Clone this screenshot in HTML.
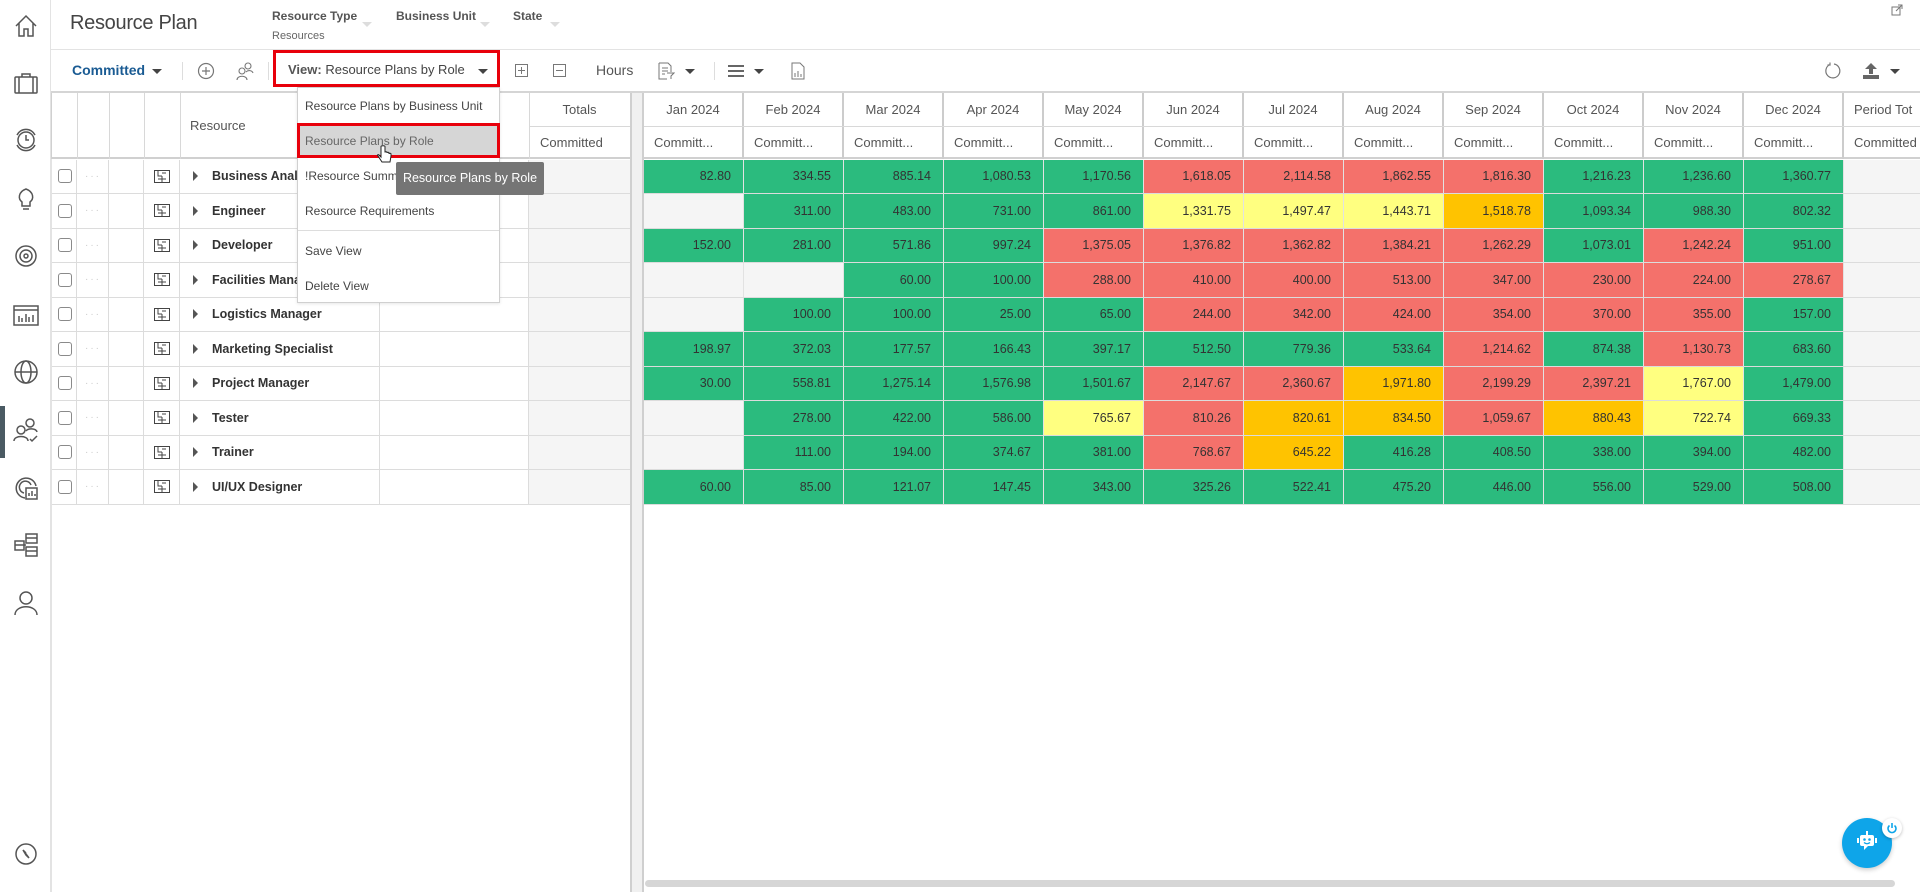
<!DOCTYPE html>
<html><head><meta charset="utf-8">
<style>
*{box-sizing:border-box;margin:0;padding:0}
body{width:1920px;height:892px;overflow:hidden;background:#fff;font-family:"Liberation Sans",sans-serif;color:#333;position:relative}
.abs{position:absolute}
#side{left:0;top:0;width:51px;height:892px;border-right:1px solid #e3e3e3;background:#fff}
#side svg{position:absolute;left:13px;width:26px;height:26px;fill:none;stroke:#555;stroke-width:1.5}
.hdr{font-size:12px;font-weight:bold;color:#555}
.car{display:inline-block;width:0;height:0;border-left:5px solid transparent;border-right:5px solid transparent;border-top:5px solid #444}
.lcar{border-top-color:#ddd}
.row{position:absolute;left:0;display:flex;height:34.5px;border-bottom:1px solid #dcdcdc}
.c{height:100%;border-right:1px solid #dcdcdc;font-size:12.5px;display:flex;align-items:center;justify-content:flex-end;padding-right:12px;color:#333}
.g{background:#2bbb7e}.r{background:#f4716b}.y{background:#ffff80}.o{background:#ffc300}.e{background:#f5f5f5}
.mc{width:100.1px;border-right:1px solid #e2e2e2}
.lc{height:100%;border-right:1px solid #dcdcdc;display:flex;align-items:center}
.cb{width:14px;height:14px;border:1.5px solid #8a8a8a;border-radius:3px;margin-left:7px}
.dots{color:#ccc;font-size:10px;letter-spacing:2px;margin-left:8px}
.nm{font-weight:bold;font-size:12.5px;color:#333;margin-left:14px}
.tri{width:0;height:0;border-top:5px solid transparent;border-bottom:5px solid transparent;border-left:5px solid #555;margin-left:13px}
.mi{position:absolute;left:0;width:100%;font-size:12px;color:#444;padding-left:7px;height:34px;line-height:34px}
</style></head><body>

<div id="side" class="abs">
<svg style="top:13px" viewBox="0 0 26 26"><path d="M3 13 L13 3 L23 13 M6 10 V23 H11 V16 H15 V23 H20 V10"/></svg>
<svg style="top:70px" viewBox="0 0 26 26"><rect x="2" y="7" width="22" height="16" rx="1"/><path d="M9 7 V4 H17 V7 M6 7 V23 M20 7 V23"/></svg>
<svg style="top:127px" viewBox="0 0 26 26"><circle cx="13" cy="13" r="8"/><path d="M13 8 V13 H16 M4 8 A10 10 0 0 1 22 8 M4 18 A10 10 0 0 0 22 18"/></svg>
<svg style="top:186px" viewBox="0 0 26 26"><path d="M9 20 V16 C5 13 5 6 13 3 C21 6 21 13 17 16 V20 Z M10 23 H16"/></svg>
<svg style="top:243px" viewBox="0 0 26 26"><circle cx="13" cy="13" r="10"/><circle cx="13" cy="13" r="6"/><circle cx="13" cy="13" r="2"/></svg>
<svg style="top:302px" viewBox="0 0 26 26"><rect x="1" y="4" width="24" height="19"/><path d="M1 8 H25 M6 20 V14 M9 20 V16 M13 20 V12 M16 20 V15 M20 20 V13"/></svg>
<svg style="top:359px" viewBox="0 0 26 26"><circle cx="13" cy="13" r="11"/><ellipse cx="13" cy="13" rx="5" ry="11"/><path d="M2 13 H24"/></svg>
<div class="abs" style="left:0;top:406px;width:5px;height:52px;background:#4a5a63"></div>
<svg style="top:417px" viewBox="0 0 26 26"><circle cx="17" cy="6" r="4"/><circle cx="8" cy="13" r="4"/><path d="M1 24 C1 18 15 18 15 24 M13 14 C15 11 23 11 24 15 M17 22 L19 24 L24 19"/></svg>
<svg style="top:475px" viewBox="0 0 26 26"><path d="M12 23 A10 10 0 1 1 23 11 M11 18 A6 6 0 1 1 18 10"/><rect x="13" y="13" width="11" height="11"/><path d="M16 21 V18 M19 21 V16 M22 21 V19"/></svg>
<svg style="top:532px" viewBox="0 0 26 26"><rect x="13" y="2" width="11" height="9"/><rect x="2" y="9" width="9" height="9"/><rect x="13" y="15" width="11" height="9"/><path d="M13 6 H24 M2 13 H11 M13 19 H24 M11 13 H13"/></svg>
<svg style="top:590px" viewBox="0 0 26 26"><circle cx="13" cy="8" r="6"/><path d="M2 25 C2 14 24 14 24 25"/></svg>
<svg style="top:841px" viewBox="0 0 26 26"><circle cx="13" cy="13" r="10"/><path d="M10 9 L16 17 L13 14 Z M10 9 L13 12 M16 17 L13 14"/></svg>
</div>

<!-- header -->
<div class="abs" style="left:70px;top:12px;font-size:20px;color:#444;letter-spacing:-0.3px">Resource Plan</div>
<div class="abs hdr" style="left:272px;top:9px">Resource Type</div>
<div class="abs" style="left:272px;top:30px;font-size:11px;color:#666">Resources</div>
<div class="abs car lcar" style="left:362px;top:22px"></div>
<div class="abs hdr" style="left:396px;top:9px">Business Unit</div>
<div class="abs car lcar" style="left:480px;top:22px"></div>
<div class="abs hdr" style="left:513px;top:9px">State</div>
<div class="abs car lcar" style="left:550px;top:22px"></div>
<svg class="abs" style="left:1890px;top:3px" width="14" height="14" viewBox="0 0 14 14" fill="none" stroke="#777"><rect x="2" y="4" width="8" height="8"/><path d="M6 8 L12 2 M8 2 H12 V6"/></svg>
<div class="abs" style="left:51px;top:49px;width:1869px;height:1px;background:#e3e3e3"></div>

<!-- toolbar -->
<div class="abs" style="left:72px;top:62px;font-size:14px;color:#1a5b93;font-weight:bold">Committed</div>
<div class="abs car" style="left:152px;top:69px"></div>
<div class="abs" style="left:182px;top:62px;width:1px;height:18px;background:#ddd"></div>
<svg class="abs" style="left:197px;top:62px" width="18" height="18" viewBox="0 0 18 18" fill="none" stroke="#777" stroke-width="1.2"><circle cx="9" cy="9" r="7.5"/><path d="M9 5 V13 M5 9 H13"/></svg>
<svg class="abs" style="left:236px;top:61px" width="18" height="20" viewBox="0 0 18 20" fill="none" stroke="#777" stroke-width="1.1"><circle cx="12" cy="5" r="3"/><circle cx="6" cy="10" r="3"/><path d="M1 19 C1 14 11 14 11 19 M10 11 C12 9 16 9 17 12"/></svg>
<div class="abs" style="left:268px;top:62px;width:1px;height:18px;background:#ddd"></div>
<div class="abs" style="left:273px;top:50px;width:227px;height:37px;border:3px solid #e8000b"></div>
<div class="abs" style="left:288px;top:62px;font-size:13px;color:#444;white-space:nowrap"><b style="color:#555">View:</b> Resource Plans by Role</div>
<div class="abs car" style="left:478px;top:69px"></div>
<svg class="abs" style="left:514px;top:63px" width="15" height="15" viewBox="0 0 15 15" fill="none" stroke="#777"><rect x="1.5" y="1.5" width="12" height="12"/><path d="M7.5 4 V11 M4 7.5 H11"/></svg>
<svg class="abs" style="left:552px;top:63px" width="15" height="15" viewBox="0 0 15 15" fill="none" stroke="#777"><rect x="1.5" y="1.5" width="12" height="12"/><path d="M4 7.5 H11"/></svg>
<div class="abs" style="left:596px;top:62px;font-size:14px;color:#555">Hours</div>
<svg class="abs" style="left:657px;top:62px" width="18" height="18" viewBox="0 0 18 18" fill="none" stroke="#777"><path d="M2 1 H11 L14 4 V10 M2 1 V17 H10 M5 6 H11 M5 9 H11 M5 12 H8 M10 11 H17 L14 14 V17"/></svg>
<div class="abs car" style="left:685px;top:69px"></div>
<div class="abs" style="left:714px;top:62px;width:1px;height:18px;background:#ddd"></div>
<svg class="abs" style="left:728px;top:64px" width="16" height="14" viewBox="0 0 16 14" fill="#666"><rect y="1" width="16" height="2"/><rect y="6" width="16" height="2"/><rect y="11" width="16" height="2"/></svg>
<div class="abs car" style="left:754px;top:69px"></div>
<svg class="abs" style="left:791px;top:62px" width="14" height="18" viewBox="0 0 14 18" fill="none" stroke="#777"><path d="M1 1 H9 L13 5 V17 H1 Z M4 15 V11 M7 15 V9 M10 15 V12"/></svg>
<svg class="abs" style="left:1824px;top:62px" width="18" height="18" viewBox="0 0 18 18" fill="none" stroke="#777" stroke-width="1.2"><path d="M6 2.5 A7 7 0 1 0 10 2 M6 0.5 V3 H3.5"/></svg>
<svg class="abs" style="left:1862px;top:63px" width="18" height="16" viewBox="0 0 18 16" fill="#666"><path d="M9 0 L15 6 H11 V11 H7 V6 H3 Z M1 12 H17 V16 H1 Z"/></svg>
<div class="abs car" style="left:1890px;top:69px"></div>
<div class="abs" style="left:51px;top:91px;width:1869px;height:2px;background:#d5d5d5"></div>

<!-- left pane header -->
<div class="abs" style="left:51px;top:93px;width:579px;height:66px;border-bottom:2px solid #d0d0d0">
 <div class="abs" style="left:0;top:0;width:1px;height:66px;background:#d0d0d0"></div>
 <div class="abs" style="left:26px;top:0;width:1px;height:66px;background:#d8d8d8"></div>
 <div class="abs" style="left:58px;top:0;width:1px;height:66px;background:#d8d8d8"></div>
 <div class="abs" style="left:93px;top:0;width:1px;height:66px;background:#d8d8d8"></div>
 <div class="abs" style="left:129px;top:0;width:1px;height:66px;background:#d8d8d8"></div>
 <div class="abs" style="left:329px;top:0;width:1px;height:66px;background:#d8d8d8"></div>
 <div class="abs" style="left:478px;top:0;width:1px;height:66px;background:#d8d8d8"></div>
 <div class="abs" style="left:478px;top:33px;width:101px;height:1px;background:#d8d8d8"></div>
 <div class="abs" style="left:139px;top:25px;font-size:13px;color:#555">Resource</div>
 <div class="abs" style="left:478px;top:9px;width:101px;text-align:center;font-size:13px;color:#555">Totals</div>
 <div class="abs" style="left:489px;top:42px;font-size:13px;color:#555">Committed</div>
</div>
<!-- splitter -->
<div class="abs" style="left:630px;top:93px;width:14px;height:799px;background:#f0f0f0;border-left:2px solid #cfcfcf;border-right:2px solid #cfcfcf"></div>

<!-- left rows -->
<div class="abs" style="left:51px;top:159.5px;width:579px">
<div class="row" style="top:0px;width:579px"><div class="lc" style="width:26px"><div class="cb"></div></div><div class="lc" style="width:32px"><span class="dots">···</span></div><div class="lc" style="width:35px"></div><div class="lc" style="width:36px;justify-content:center"><svg width="16" height="13" viewBox="0 0 16 13" fill="none" stroke="#444"><rect x=".5" y=".5" width="15" height="12"/><path d="M4 .5 V6 H8 M8 3 H12 M8 6 V12 M4 9 H12"/></svg></div><div class="lc" style="width:200px"><div class="tri"></div><span class="nm">Business Analyst</span></div><div class="lc" style="width:149px"></div><div class="lc e" style="width:101px;border:0"></div></div>
<div class="row" style="top:34.5px;width:579px"><div class="lc" style="width:26px"><div class="cb"></div></div><div class="lc" style="width:32px"><span class="dots">···</span></div><div class="lc" style="width:35px"></div><div class="lc" style="width:36px;justify-content:center"><svg width="16" height="13" viewBox="0 0 16 13" fill="none" stroke="#444"><rect x=".5" y=".5" width="15" height="12"/><path d="M4 .5 V6 H8 M8 3 H12 M8 6 V12 M4 9 H12"/></svg></div><div class="lc" style="width:200px"><div class="tri"></div><span class="nm">Engineer</span></div><div class="lc" style="width:149px"></div><div class="lc e" style="width:101px;border:0"></div></div>
<div class="row" style="top:69px;width:579px"><div class="lc" style="width:26px"><div class="cb"></div></div><div class="lc" style="width:32px"><span class="dots">···</span></div><div class="lc" style="width:35px"></div><div class="lc" style="width:36px;justify-content:center"><svg width="16" height="13" viewBox="0 0 16 13" fill="none" stroke="#444"><rect x=".5" y=".5" width="15" height="12"/><path d="M4 .5 V6 H8 M8 3 H12 M8 6 V12 M4 9 H12"/></svg></div><div class="lc" style="width:200px"><div class="tri"></div><span class="nm">Developer</span></div><div class="lc" style="width:149px"></div><div class="lc e" style="width:101px;border:0"></div></div>
<div class="row" style="top:103.5px;width:579px"><div class="lc" style="width:26px"><div class="cb"></div></div><div class="lc" style="width:32px"><span class="dots">···</span></div><div class="lc" style="width:35px"></div><div class="lc" style="width:36px;justify-content:center"><svg width="16" height="13" viewBox="0 0 16 13" fill="none" stroke="#444"><rect x=".5" y=".5" width="15" height="12"/><path d="M4 .5 V6 H8 M8 3 H12 M8 6 V12 M4 9 H12"/></svg></div><div class="lc" style="width:200px"><div class="tri"></div><span class="nm">Facilities Manager</span></div><div class="lc" style="width:149px"></div><div class="lc e" style="width:101px;border:0"></div></div>
<div class="row" style="top:138px;width:579px"><div class="lc" style="width:26px"><div class="cb"></div></div><div class="lc" style="width:32px"><span class="dots">···</span></div><div class="lc" style="width:35px"></div><div class="lc" style="width:36px;justify-content:center"><svg width="16" height="13" viewBox="0 0 16 13" fill="none" stroke="#444"><rect x=".5" y=".5" width="15" height="12"/><path d="M4 .5 V6 H8 M8 3 H12 M8 6 V12 M4 9 H12"/></svg></div><div class="lc" style="width:200px"><div class="tri"></div><span class="nm">Logistics Manager</span></div><div class="lc" style="width:149px"></div><div class="lc e" style="width:101px;border:0"></div></div>
<div class="row" style="top:172.5px;width:579px"><div class="lc" style="width:26px"><div class="cb"></div></div><div class="lc" style="width:32px"><span class="dots">···</span></div><div class="lc" style="width:35px"></div><div class="lc" style="width:36px;justify-content:center"><svg width="16" height="13" viewBox="0 0 16 13" fill="none" stroke="#444"><rect x=".5" y=".5" width="15" height="12"/><path d="M4 .5 V6 H8 M8 3 H12 M8 6 V12 M4 9 H12"/></svg></div><div class="lc" style="width:200px"><div class="tri"></div><span class="nm">Marketing Specialist</span></div><div class="lc" style="width:149px"></div><div class="lc e" style="width:101px;border:0"></div></div>
<div class="row" style="top:207px;width:579px"><div class="lc" style="width:26px"><div class="cb"></div></div><div class="lc" style="width:32px"><span class="dots">···</span></div><div class="lc" style="width:35px"></div><div class="lc" style="width:36px;justify-content:center"><svg width="16" height="13" viewBox="0 0 16 13" fill="none" stroke="#444"><rect x=".5" y=".5" width="15" height="12"/><path d="M4 .5 V6 H8 M8 3 H12 M8 6 V12 M4 9 H12"/></svg></div><div class="lc" style="width:200px"><div class="tri"></div><span class="nm">Project Manager</span></div><div class="lc" style="width:149px"></div><div class="lc e" style="width:101px;border:0"></div></div>
<div class="row" style="top:241.5px;width:579px"><div class="lc" style="width:26px"><div class="cb"></div></div><div class="lc" style="width:32px"><span class="dots">···</span></div><div class="lc" style="width:35px"></div><div class="lc" style="width:36px;justify-content:center"><svg width="16" height="13" viewBox="0 0 16 13" fill="none" stroke="#444"><rect x=".5" y=".5" width="15" height="12"/><path d="M4 .5 V6 H8 M8 3 H12 M8 6 V12 M4 9 H12"/></svg></div><div class="lc" style="width:200px"><div class="tri"></div><span class="nm">Tester</span></div><div class="lc" style="width:149px"></div><div class="lc e" style="width:101px;border:0"></div></div>
<div class="row" style="top:276px;width:579px"><div class="lc" style="width:26px"><div class="cb"></div></div><div class="lc" style="width:32px"><span class="dots">···</span></div><div class="lc" style="width:35px"></div><div class="lc" style="width:36px;justify-content:center"><svg width="16" height="13" viewBox="0 0 16 13" fill="none" stroke="#444"><rect x=".5" y=".5" width="15" height="12"/><path d="M4 .5 V6 H8 M8 3 H12 M8 6 V12 M4 9 H12"/></svg></div><div class="lc" style="width:200px"><div class="tri"></div><span class="nm">Trainer</span></div><div class="lc" style="width:149px"></div><div class="lc e" style="width:101px;border:0"></div></div>
<div class="row" style="top:310.5px;width:579px"><div class="lc" style="width:26px"><div class="cb"></div></div><div class="lc" style="width:32px"><span class="dots">···</span></div><div class="lc" style="width:35px"></div><div class="lc" style="width:36px;justify-content:center"><svg width="16" height="13" viewBox="0 0 16 13" fill="none" stroke="#444"><rect x=".5" y=".5" width="15" height="12"/><path d="M4 .5 V6 H8 M8 3 H12 M8 6 V12 M4 9 H12"/></svg></div><div class="lc" style="width:200px"><div class="tri"></div><span class="nm">UI/UX Designer</span></div><div class="lc" style="width:149px"></div><div class="lc e" style="width:101px;border:0"></div></div>
</div>
<div class="abs" style="left:51px;top:159px;width:1px;height:733px;background:#e3e3e3"></div>

<!-- right header -->
<div class="abs" style="left:644px;top:93px;width:1276px;height:66px;border-bottom:2px solid #d0d0d0;font-size:13px;color:#555">
 <div class="abs" style="left:0;top:33px;width:1276px;height:1px;background:#d8d8d8"></div>
 <div class="abs" style="left:0;top:0;width:1276px;display:flex;height:33px;line-height:33px;text-align:center">
  <div style="width:100.1px;border-right:2px solid #ccc">Jan 2024</div><div style="width:100.1px;border-right:2px solid #ccc">Feb 2024</div><div style="width:100.1px;border-right:2px solid #ccc">Mar 2024</div><div style="width:100.1px;border-right:2px solid #ccc">Apr 2024</div><div style="width:100.1px;border-right:2px solid #ccc">May 2024</div><div style="width:100.1px;border-right:2px solid #ccc">Jun 2024</div><div style="width:100.1px;border-right:2px solid #ccc">Jul 2024</div><div style="width:100.1px;border-right:2px solid #ccc">Aug 2024</div><div style="width:100.1px;border-right:2px solid #ccc">Sep 2024</div><div style="width:100.1px;border-right:2px solid #ccc">Oct 2024</div><div style="width:100.1px;border-right:2px solid #ccc">Nov 2024</div><div style="width:100.1px;border-right:2px solid #ccc">Dec 2024</div><div style="width:76px;white-space:nowrap;overflow:hidden;padding-left:10px;text-align:left">Period Tot</div>
 </div>
 <div class="abs" style="left:0;top:34px;width:1276px;display:flex;height:32px;line-height:32px">
  <div style="width:100.1px;border-right:2px solid #ccc;padding-left:10px">Committ...</div><div style="width:100.1px;border-right:2px solid #ccc;padding-left:10px">Committ...</div><div style="width:100.1px;border-right:2px solid #ccc;padding-left:10px">Committ...</div><div style="width:100.1px;border-right:2px solid #ccc;padding-left:10px">Committ...</div><div style="width:100.1px;border-right:2px solid #ccc;padding-left:10px">Committ...</div><div style="width:100.1px;border-right:2px solid #ccc;padding-left:10px">Committ...</div><div style="width:100.1px;border-right:2px solid #ccc;padding-left:10px">Committ...</div><div style="width:100.1px;border-right:2px solid #ccc;padding-left:10px">Committ...</div><div style="width:100.1px;border-right:2px solid #ccc;padding-left:10px">Committ...</div><div style="width:100.1px;border-right:2px solid #ccc;padding-left:10px">Committ...</div><div style="width:100.1px;border-right:2px solid #ccc;padding-left:10px">Committ...</div><div style="width:100.1px;border-right:2px solid #ccc;padding-left:10px">Committ...</div><div style="width:76px;padding-left:10px;white-space:nowrap;overflow:hidden">Committed</div>
 </div>
</div>

<!-- right rows -->
<div class="abs" style="left:644px;top:159.5px;width:1276px">
<div class="row" style="top:0;width:1276px"><div class="c mc g">82.80</div><div class="c mc g">334.55</div><div class="c mc g">885.14</div><div class="c mc g">1,080.53</div><div class="c mc g">1,170.56</div><div class="c mc r">1,618.05</div><div class="c mc r">2,114.58</div><div class="c mc r">1,862.55</div><div class="c mc r">1,816.30</div><div class="c mc g">1,216.23</div><div class="c mc g">1,236.60</div><div class="c mc g">1,360.77</div><div class="c e" style="width:76px;border:0"></div></div>
<div class="row" style="top:34.5px;width:1276px"><div class="c mc e"></div><div class="c mc g">311.00</div><div class="c mc g">483.00</div><div class="c mc g">731.00</div><div class="c mc g">861.00</div><div class="c mc y">1,331.75</div><div class="c mc y">1,497.47</div><div class="c mc y">1,443.71</div><div class="c mc o">1,518.78</div><div class="c mc g">1,093.34</div><div class="c mc g">988.30</div><div class="c mc g">802.32</div><div class="c e" style="width:76px;border:0"></div></div>
<div class="row" style="top:69px;width:1276px"><div class="c mc g">152.00</div><div class="c mc g">281.00</div><div class="c mc g">571.86</div><div class="c mc g">997.24</div><div class="c mc r">1,375.05</div><div class="c mc r">1,376.82</div><div class="c mc r">1,362.82</div><div class="c mc r">1,384.21</div><div class="c mc r">1,262.29</div><div class="c mc g">1,073.01</div><div class="c mc r">1,242.24</div><div class="c mc g">951.00</div><div class="c e" style="width:76px;border:0"></div></div>
<div class="row" style="top:103.5px;width:1276px"><div class="c mc e"></div><div class="c mc e"></div><div class="c mc g">60.00</div><div class="c mc g">100.00</div><div class="c mc r">288.00</div><div class="c mc r">410.00</div><div class="c mc r">400.00</div><div class="c mc r">513.00</div><div class="c mc r">347.00</div><div class="c mc r">230.00</div><div class="c mc r">224.00</div><div class="c mc r">278.67</div><div class="c e" style="width:76px;border:0"></div></div>
<div class="row" style="top:138px;width:1276px"><div class="c mc e"></div><div class="c mc g">100.00</div><div class="c mc g">100.00</div><div class="c mc g">25.00</div><div class="c mc g">65.00</div><div class="c mc r">244.00</div><div class="c mc r">342.00</div><div class="c mc r">424.00</div><div class="c mc r">354.00</div><div class="c mc r">370.00</div><div class="c mc r">355.00</div><div class="c mc g">157.00</div><div class="c e" style="width:76px;border:0"></div></div>
<div class="row" style="top:172.5px;width:1276px"><div class="c mc g">198.97</div><div class="c mc g">372.03</div><div class="c mc g">177.57</div><div class="c mc g">166.43</div><div class="c mc g">397.17</div><div class="c mc g">512.50</div><div class="c mc g">779.36</div><div class="c mc g">533.64</div><div class="c mc r">1,214.62</div><div class="c mc g">874.38</div><div class="c mc r">1,130.73</div><div class="c mc g">683.60</div><div class="c e" style="width:76px;border:0"></div></div>
<div class="row" style="top:207px;width:1276px"><div class="c mc g">30.00</div><div class="c mc g">558.81</div><div class="c mc g">1,275.14</div><div class="c mc g">1,576.98</div><div class="c mc g">1,501.67</div><div class="c mc r">2,147.67</div><div class="c mc r">2,360.67</div><div class="c mc o">1,971.80</div><div class="c mc r">2,199.29</div><div class="c mc r">2,397.21</div><div class="c mc y">1,767.00</div><div class="c mc g">1,479.00</div><div class="c e" style="width:76px;border:0"></div></div>
<div class="row" style="top:241.5px;width:1276px"><div class="c mc e"></div><div class="c mc g">278.00</div><div class="c mc g">422.00</div><div class="c mc g">586.00</div><div class="c mc y">765.67</div><div class="c mc r">810.26</div><div class="c mc o">820.61</div><div class="c mc o">834.50</div><div class="c mc r">1,059.67</div><div class="c mc o">880.43</div><div class="c mc y">722.74</div><div class="c mc g">669.33</div><div class="c e" style="width:76px;border:0"></div></div>
<div class="row" style="top:276px;width:1276px"><div class="c mc e"></div><div class="c mc g">111.00</div><div class="c mc g">194.00</div><div class="c mc g">374.67</div><div class="c mc g">381.00</div><div class="c mc r">768.67</div><div class="c mc o">645.22</div><div class="c mc g">416.28</div><div class="c mc g">408.50</div><div class="c mc g">338.00</div><div class="c mc g">394.00</div><div class="c mc g">482.00</div><div class="c e" style="width:76px;border:0"></div></div>
<div class="row" style="top:310.5px;width:1276px"><div class="c mc g">60.00</div><div class="c mc g">85.00</div><div class="c mc g">121.07</div><div class="c mc g">147.45</div><div class="c mc g">343.00</div><div class="c mc g">325.26</div><div class="c mc g">522.41</div><div class="c mc g">475.20</div><div class="c mc g">446.00</div><div class="c mc g">556.00</div><div class="c mc g">529.00</div><div class="c mc g">508.00</div><div class="c e" style="width:76px;border:0"></div></div>
</div>

<!-- scrollbar -->
<div class="abs" style="left:645px;top:880px;width:1250px;height:7px;background:#d6d6d6;border-radius:4px"></div>

<!-- dropdown menu -->
<div class="abs" style="left:297px;top:87px;width:203px;height:216px;background:#fff;border:1px solid #d0d0d0;box-shadow:0 1px 3px rgba(0,0,0,.1)">
 <div class="mi" style="top:1px">Resource Plans by Business Unit</div>
 <div class="mi" style="top:36px;background:#d6d6d6;color:#666">Resource Plans by Role</div>
 <div class="mi" style="top:71px">!Resource Summary</div>
 <div class="mi" style="top:106px">Resource Requirements</div>
 <div class="abs" style="left:0;top:142px;width:100%;height:1px;background:#ddd"></div>
 <div class="mi" style="top:146px">Save View</div>
 <div class="mi" style="top:181px">Delete View</div>
</div>
<div class="abs" style="left:297px;top:123px;width:203px;height:35px;border:3px solid #e8000b"></div>
<!-- cursor -->
<svg class="abs" style="left:377px;top:145px" width="16" height="20" viewBox="0 0 16 20"><path d="M4 1.5 V12 L2 10 C1 9 0 10 1 11 L5 17 H13 L14 11 V9 C14 8 12 8 12 9 V8 C12 7 10 7 10 8 V7.5 C10 6.5 8 6.5 8 7.5 V1.5 C8 0.5 4 0.5 4 1.5 Z" fill="#fff" stroke="#222" stroke-width="1"/></svg>
<!-- tooltip -->
<div class="abs" style="left:396px;top:162px;width:148px;height:33px;background:#757575;color:#fff;font-size:12.5px;line-height:33px;text-align:center;border-radius:2px;white-space:nowrap">Resource Plans by Role</div>

<!-- chat bubble -->
<div class="abs" style="left:1842px;top:818px;width:50px;height:50px;border-radius:50%;background:#0ea5e9;box-shadow:0 2px 5px rgba(0,0,0,.2)"></div>
<svg class="abs" style="left:1857px;top:831px" width="20" height="22" viewBox="0 0 20 22" fill="#fff"><rect x="9" y="0" width="2" height="4"/><rect x="3" y="4" width="14" height="11" rx="2"/><rect x="0" y="7" width="2" height="5"/><rect x="18" y="7" width="2" height="5"/><path d="M7 15 L7 19 L11 15 Z"/><circle cx="7.5" cy="8.5" r="1.3" fill="#0ea5e9"/><circle cx="12.5" cy="8.5" r="1.3" fill="#0ea5e9"/><path d="M7 11.5 Q10 14 13 11.5" stroke="#0ea5e9" stroke-width="1.3" fill="none"/></svg>
<div class="abs" style="left:1882px;top:818px;width:20px;height:20px;border-radius:50%;background:#fff;box-shadow:0 1px 3px rgba(0,0,0,.25)"></div>
<svg class="abs" style="left:1886px;top:822px" width="12" height="12" viewBox="0 0 12 12" fill="none" stroke="#0ea5e9" stroke-width="1.6"><path d="M3.5 3.5 A4 4 0 1 0 8.5 3.5 M6 1 V6"/></svg>
</body></html>
